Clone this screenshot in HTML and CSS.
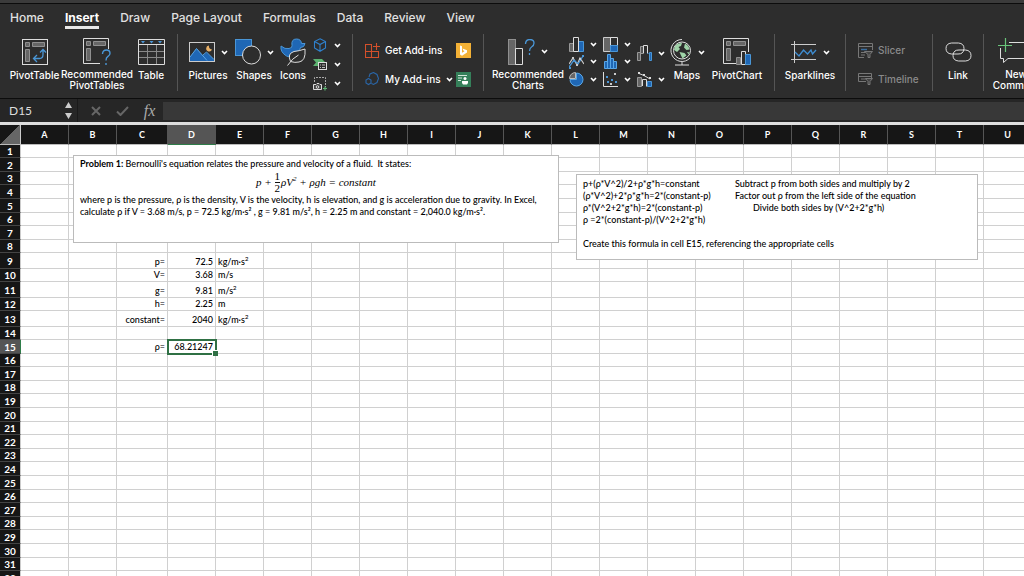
FILE: index.html
```html
<!doctype html>
<html lang="en-US">
	<head>
		<title>Workbook</title>
		<meta charset="UTF-8">
		<meta name="viewport" content="width=device-width, initial-scale=1.0">
		<link rel="stylesheet" href="styles.css">
	</head>

	<body>
		<svg class="defs" aria-hidden="true">
			<symbol id="chevron" viewBox="0 0 7 5"><path d="M1 1l2.500 2.500L6 1" fill="none" stroke="#fff" stroke-width="1.600"/></symbol>
		</svg>

		<div class="titlebar"></div>

		<nav class="tabs">
			<a href="#home">Home</a>
			<a href="#insert" class="active">Insert</a>
			<a href="#draw">Draw</a>
			<a href="#layout">Page Layout</a>
			<a href="#formulas">Formulas</a>
			<a href="#data">Data</a>
			<a href="#review">Review</a>
			<a href="#view">View</a>
		</nav>

		<div class="ribbon">
			<div class="group">
				<button class="tool w-pivot">
					<span class="icon"><svg width="26" height="26" viewBox="0 0 26 26" fill="none">
						<rect x=".5" y=".5" width="25" height="25" stroke="#ddd"/>
						<path d="M3.500 3.500h4v4h-4zM10.500 3.500h12v4h-12zM3.500 10.500h4v12h-4z" fill="#666" stroke="#909090"/>
						<path d="M12 19.500h5.500q3.500 0 3.500-4V11M15 16l-3.500 3.500L15 23M18 13.500l3-3 3 3" stroke="#4a96d6" stroke-width="1.300"/>
					</svg></span>
					PivotTable
				</button>
				<button class="tool w-rec">
					<span class="icon"><svg width="28" height="28" viewBox="0 0 28 28" fill="none">
						<path d="M17 25.500H.500V.500h25V11" stroke="#ddd"/>
						<path d="M3.500 3.500h4v4h-4zM10.500 3.500h12v4h-12zM3.500 10.500h4v12h-4z" fill="#666" stroke="#909090"/>
						<path d="M19.500 16q.200-4 4-4 3.500 0 3.500 3.200 0 2-2 3.200t-2 4M23 25v2" stroke="#4a96d6" stroke-width="1.400"/>
					</svg></span>
					Recommended<br>PivotTables
				</button>
				<button class="tool w-table">
					<span class="icon"><svg width="27" height="26" viewBox="0 0 27 26" fill="none">
						<path d="M9.500 6v19M18.500 6v19M1 12.500h25M1 18.500h25" stroke="#888"/>
						<path d="M.500.500h26v25H.500zM.500 5.500h26" stroke="#ddd"/>
						<path d="M3 2h4L5 4.500zM11.500 2h4l-2 2.500zM20 2h4l-2 2.500z" fill="#4a96d6"/>
					</svg></span>
					Table
				</button>
			</div>

			<div class="group">
				<button class="tool w-pictures">
					<span class="icon"><svg width="26" height="20" viewBox="0 0 26 20" fill="none">
						<path d="M1 15l6.500-8.500 6.500 7 3.500-3 7.500 7V19H1z" fill="#1f67b5"/>
						<path d="M1 15l6.500-8.500L18 18.500M13.500 13.500l4-3.500 7.500 7.500" stroke="#58a6e6"/>
						<rect x=".5" y=".5" width="25" height="19" stroke="#ccc"/>
						<path d="M20 3.500a3 3 0 1 0 3 4 3.500 3.500 0 0 1-3-4z" fill="#e8b067"/>
					</svg><svg class="chev"><use href="#chevron"/></svg></span>
					Pictures
				</button>
				<button class="tool w-shapes">
					<span class="icon"><svg width="26" height="26" viewBox="0 0 26 26">
						<rect x=".5" y=".5" width="16" height="16" fill="#1f67b5" stroke="#4a96d6"/>
						<circle cx="16.500" cy="16" r="9" fill="#2d2d2d" stroke="#ddd"/>
					</svg><svg class="chev"><use href="#chevron"/></svg></span>
					Shapes
				</button>
				<button class="tool w-icons">
					<span class="icon"><svg width="26" height="28" viewBox="0 0 26 28">
						<path d="M1 8q4 3.500 8 2.500 3.500-.500 3-3Q11 1 16.500 1q4.500 0 5 4.500H25q-.500 4-4.500 4-1 5-5 9-5 2-9-.500Q0 14 1 8z" fill="#1f67b5" stroke="#4a96d6"/>
						<path d="M10.500 23.500q-3.500-8 3.500-10 5-.500 11-2.500 1 12-6 13-4 1-8.500-.500z" fill="#2d2d2d" stroke="#ddd"/>
						<path d="M7.500 27.500q5-7.500 11-10.500" fill="none" stroke="#ddd"/>
					</svg></span>
					Icons
				</button>
				<div class="stack">
					<button class="mini" aria-label="3D Models"><svg width="14" height="14" viewBox="0 0 14 14" fill="none" stroke="#2f80cc">
						<path d="M7 .800l5.500 2.700v6.500L7 13.300 1.500 10V3.500zM1.500 3.500L7 6.500l5.500-3M7 6.500v6.800" stroke-width="1.100"/>
					</svg><svg class="chev"><use href="#chevron"/></svg></button>
					<button class="mini" aria-label="SmartArt"><svg width="14" height="12" viewBox="0 0 14 12">
						<path d="M0 1h9l3 3H6v4H0l3-3.500z" fill="#5cb270"/>
						<rect x="5.500" y="4.500" width="8" height="7" fill="#2d2d2d" stroke="#ddd"/>
						<path d="M7 7h1m1 0h3M7 9.500h1m1 0h3" stroke="#bbb"/>
					</svg><svg class="chev"><use href="#chevron"/></svg></button>
					<button class="mini" aria-label="Screenshot"><svg width="14" height="15" viewBox="0 0 14 15" fill="none">
						<path d="M1.500 6V1.500h11V11" stroke="#aaa" stroke-dasharray="2 1"/>
						<path d="M.500 8.500H3l1-1h2l1 1h1.500v5h-8z" fill="#444" stroke="#ddd"/>
						<circle cx="4.500" cy="11" r="1.300" stroke="#ddd"/>
						<path d="M10 12.500h4M12 10.500v4" stroke="#5cb270" stroke-width="1.200"/>
					</svg><svg class="chev"><use href="#chevron"/></svg></button>
				</div>
			</div>

			<div class="group addins">
				<div class="list">
					<button class="row"><svg width="15" height="15" viewBox="0 0 15 15" fill="none" stroke="#d3502b">
						<path d="M.500 1.500h6v13h-6zM.500 8.500h13v6H.500M11.500 0v7M8 3.500h7" stroke-width="1.100"/>
					</svg>Get Add-ins</button>
					<button class="row"><svg width="15" height="14" viewBox="0 0 15 14" fill="none" stroke="#2a66a8">
						<path d="M4 5l1-3 3.500-1.500L12 2.500l1.500 4-1.500 4-3.500 2-2-1M3.500 6.500l2.500 1.500v3L3.500 12.500 1 11V8z" stroke-width="1.100"/>
					</svg>My Add-ins<svg class="chev"><use href="#chevron"/></svg></button>
				</div>
				<div class="list">
					<button class="row" aria-label="Bing Maps"><svg width="15" height="15" viewBox="0 0 15 15">
						<rect width="15" height="15" fill="#f3b136"/>
						<path d="M4 2.500l2 .700v6.500l2.500-1.500-1.200-.600-.800-2 4.500 1.700v2.200L6 12.700l-2-1.200z" fill="#fff"/>
					</svg></button>
					<button class="row" aria-label="People Graph"><svg width="15" height="15" viewBox="0 0 15 15">
						<rect width="15" height="15" fill="#35805a"/>
						<path d="M2 3.500h9M2 6h4M2 8.500h3" stroke="#d4e8dc"/>
						<circle cx="9" cy="6.500" r="1.500" fill="#fff"/><path d="M6 9h6v2l-1 1.500H7L6 11z" fill="#fff"/>
					</svg></button>
				</div>
			</div>

			<div class="group">
				<button class="tool w-rec">
					<span class="icon"><svg width="27" height="26" viewBox="0 0 27 26" fill="none">
						<rect x=".5" y=".5" width="7" height="25" fill="#666" stroke="#909090"/>
						<path d="M7.500 9.500h7v16h-7z" stroke="#ddd"/>
						<path d="M17.500 5q.200-4.500 4.300-4.500T26 4q0 2.500-2.200 3.700T21.500 12M21.500 14v2" stroke="#4a96d6" stroke-width="1.300"/>
					</svg><svg class="chev"><use href="#chevron"/></svg></span>
					Recommended<br>Charts
				</button>
				<div class="stack charts">
					<button class="mini" aria-label="Column chart"><svg width="15" height="15" viewBox="0 0 15 15">
						<path d="M.500 6.500h4v8h-4z" fill="#666" stroke="#999"/><path d="M9.500 4.500h5v10h-5z" fill="#1f67b5" stroke="#4a96d6"/><path d="M4.500.500h5v14h-5z" fill="#2d2d2d" stroke="#ddd"/>
					</svg><svg class="chev"><use href="#chevron"/></svg></button>
					<button class="mini" aria-label="Line chart"><svg width="15" height="14" viewBox="0 0 15 14" fill="none">
						<path d="M0 9l4-6 4 7 3-7 4 6" stroke="#ccc" stroke-width="1.200"/><path d="M0 12l5-7 4 4 5-8" stroke="#4a96d6" stroke-width="1.300"/>
						<path d="M3 2h2v2H3zM7 9h2v2H7zM10 3h2v2h-2z" fill="#ccc"/><path d="M4 5h2v2H4zM13 0h2v2h-2zM0 12h2v2H0z" fill="#4a96d6"/>
					</svg><svg class="chev"><use href="#chevron"/></svg></button>
					<button class="mini" aria-label="Pie chart"><svg width="15" height="15" viewBox="0 0 15 15">
						<path d="M7.500 1A6.500 6.500 0 1 1 1 7.500h6.500z" fill="#1f67b5" stroke="#58a6e6"/><path d="M6.500.500v6h-6a6 6 0 0 1 6-6z" fill="#666" stroke="#bbb"/>
					</svg><svg class="chev"><use href="#chevron"/></svg></button>
				</div>
				<div class="stack charts">
					<button class="mini" aria-label="Treemap"><svg width="15" height="15" viewBox="0 0 15 15">
						<path d="M.500.500h7v14h-7z" fill="#666" stroke="#ccc"/><path d="M7.500.500h7v8h-7z" fill="none" stroke="#ddd"/><path d="M7.500 8.500h7v6h-7z" fill="#1f67b5" stroke="#4a96d6"/>
					</svg><svg class="chev"><use href="#chevron"/></svg></button>
					<button class="mini" aria-label="Histogram"><svg width="15" height="15" viewBox="0 0 15 15">
						<path d="M1.500 7.500h3v7h-3zM4.500.500h3v14h-3zM7.500 4.500h3v10h-3zM10.500 7.500h3v7h-3z" fill="#1f67b5" stroke="#58a6e6"/>
					</svg><svg class="chev"><use href="#chevron"/></svg></button>
					<button class="mini" aria-label="Scatter chart"><svg width="15" height="15" viewBox="0 0 15 15">
						<path d="M.500 0v14.500H15" fill="none" stroke="#ddd"/><path d="M3 4h2v2H3zM8 7h2v2H8zM4 9h2v2H4zM12 9h2v2h-2z" fill="#4a96d6"/><path d="M11 1h2v2h-2zM7 11h2v2H7z" fill="#ccc"/>
					</svg><svg class="chev"><use href="#chevron"/></svg></button>
				</div>
				<div class="stack charts pair">
					<button class="mini" aria-label="Waterfall chart"><svg width="15" height="16" viewBox="0 0 15 16" fill="none">
						<path d="M.500 7.500h3v8h-3zM3.500 1.500h3v7h-3z" fill="#555" stroke="#999"/><path d="M6.500 8V.500h4v8" stroke="#ddd"/><path d="M10.500 8.500h1M12.500 7.500h2v8h-2z" fill="#1f67b5" stroke="#4a96d6"/>
					</svg><svg class="chev"><use href="#chevron"/></svg></button>
					<button class="mini" aria-label="Combo chart"><svg width="15" height="15" viewBox="0 0 15 15">
						<path d="M.500 5.500h4v9h-4z" fill="#666" stroke="#999"/><path d="M5.500 14V7.500h4v7" fill="none" stroke="#ddd"/><path d="M10.500 9.500h4v5h-4z" fill="#1f67b5" stroke="#4a96d6"/><path d="M2 1.500l5 2 6 3.500" fill="none" stroke="#ddd"/><path d="M1 0h2v2H1zM6 2h2v2H6zM12 5h2v2h-2z" fill="#ddd"/>
					</svg><svg class="chev"><use href="#chevron"/></svg></button>
				</div>
				<button class="tool w-maps">
					<span class="icon"><svg width="22" height="27" viewBox="0 0 22 27" fill="none">
						<circle cx="12" cy="11.500" r="8.500" stroke="#ddd"/>
						<path d="M12 .500A11 11 0 1 0 20 19M12 22.500V26M5 26h14" stroke="#ddd"/>
						<path d="M5 7q3-3.500 7-3l-1 3-2.500 1 1.500 2-3 3-3-2zM15 4.500q4 2 4.500 6l-3 .500-2.500-2.500zM9.500 13l5 1 2 2.500-4 3-1.500-3zM17 13l2.500.500-1 2z" fill="#9fd3a8"/>
					</svg><svg class="chev"><use href="#chevron"/></svg></span>
					Maps
				</button>
				<button class="tool w-chart">
					<span class="icon"><svg width="28" height="28" viewBox="0 0 28 28">
						<path d="M13 25.500H.500V.500h25V14" fill="none" stroke="#ddd"/>
						<path d="M3.500 3.500h4v4h-4zM10.500 3.500h12v4h-12zM3.500 10.500h4v12h-4zM13.500 19.500h4v7h-4z" fill="#666" stroke="#909090"/>
						<path d="M18.500 13.500h4v13h-4z" fill="#2d2d2d" stroke="#ddd"/><path d="M22.500 16.500h5v10h-5z" fill="#1f67b5" stroke="#4a96d6"/>
					</svg></span>
					PivotChart
				</button>
			</div>

			<div class="group">
				<button class="tool w-spark">
					<span class="icon"><svg width="26" height="22" viewBox="0 0 26 22" fill="none">
						<path d="M3.500 0v22M0 3.500h25M0 18.500h25" stroke="#ccc"/><path d="M4 11l4 4 4.500-6 4 4 3.500-4 1.500 4L25 9" stroke="#3e8cd0" stroke-width="1.300"/>
					</svg><svg class="chev"><use href="#chevron"/></svg></span>
					Sparklines
				</button>
			</div>

			<div class="group filters">
				<div class="list">
					<button class="row" disabled><svg width="15" height="15" viewBox="0 0 15 15" fill="none" stroke="#777">
						<path d="M6 14.500H.500V.500h14V7M.500 3.500h14M3 9.500h4M3 12h4"/><path d="M3 6.500h6" stroke="#3a6ea0" stroke-width="1.500"/><path d="M6.500 8.500h8L12 11.500v3h-2v-3z" fill="#444"/>
					</svg>Slicer</button>
					<button class="row" disabled><svg width="15" height="12" viewBox="0 0 15 12" fill="none" stroke="#777">
						<path d="M8 8.500H.500V.500h13V5M.500 3.500h13M3 6h5"/><path d="M7.500 5.500h7L12 8.500v3h-2v-3z" fill="#444"/>
					</svg>Timeline</button>
				</div>
			</div>

			<div class="group">
				<button class="tool w-link">
					<span class="icon"><svg width="27" height="20" viewBox="0 0 27 20" fill="none" stroke="#ddd">
						<path d="M9 12H6.500Q1 11.500 1 6.500T6.500 1h7Q19 1.500 19 6.500 19 9.500 17 11"/><path d="M18 8h2.500q5.500.500 5.500 5.500T20.500 19h-7Q8 18.500 8 13.500 8 10.500 10 9"/>
						<path d="M9 12h4q3 0 4-1M18 8h-4q-3 0-4 1"/>
					</svg></span>
					Link
				</button>
			</div>

			<div class="group">
				<button class="tool w-comment">
					<span class="icon"><svg width="36" height="28" viewBox="0 0 36 28" fill="none">
						<path d="M11 4.500h24v16H10l-4.500 4v-4H2.500V10" stroke="#ddd"/><path d="M0 7.500h14M7.500 0v14" stroke="#69c47a" stroke-width="1.200"/>
					</svg></span>
					New<br>Comment
				</button>
			</div>
		</div>

		<div class="formula-bar">
			<input class="name-box" type="text" aria-label="Name box" value="D15">
			<button class="stepper" aria-label="Choose name"><svg width="7" height="17" viewBox="0 0 7 17"><path d="M3.500 0L7 6H0zM0 11h7l-3.500 6z" fill="#ccc"/></svg></button>
			<button class="edit" aria-label="Cancel"><svg width="10" height="10" viewBox="0 0 10 10"><path d="M1 1l8 8M9 1L1 9" stroke="#666" stroke-width="2"/></svg></button>
			<button class="edit" aria-label="Enter"><svg width="13" height="10" viewBox="0 0 13 10"><path d="M1 5.500L4.500 9 12 1" fill="none" stroke="#666" stroke-width="2"/></svg></button>
			<button class="edit fx" aria-label="Insert function">fx</button>
			<input class="formula" type="text" aria-label="Formula">
		</div>

		<main class="sheet">
			<table id="grid"></table>

			<section class="textbox problem">
				<p><b>Problem 1:</b> Bernoulli's equation relates the pressure and velocity of a fluid.&nbsp; It states:</p>
				<p class="equation">p + <span class="fraction"><span>1</span><span>2</span></span>ρV<sup>2</sup>&nbsp;+ ρgh = constant</p>
				<p>where p is the pressure, ρ is the density, V is the velocity, h is elevation, and g is acceleration due to gravity. In Excel,<br>
				calculate ρ if V = 3.68 m/s, p = 72.5 kg/m·s² , g = 9.81 m/s², h = 2.25 m and constant = 2,040.0 kg/m·s².</p>
			</section>

			<section class="textbox steps">
				<p><span>p+(ρ*V^2)/2+ρ*g*h=constant</span><span>Subtract p from both sides and multiply by 2</span></p>
				<p><span>(ρ*V^2)+2*ρ*g*h=2*(constant-p)</span><span>Factor out ρ from the left side of the equation</span></p>
				<p class="indent"><span>ρ*(V^2+2*g*h)=2*(constant-p)</span><span>Divide both sides by (V^2+2*g*h)</span></p>
				<p>ρ =2*(constant-p)/(V^2+2*g*h)</p>
				<p class="note">Create this formula in cell E15, referencing the appropriate cells</p>
			</section>
		</main>

		<script>
		const columns = "ABCDEFGHIJKLMNOPQRSTU".split("");
		const rowCount = 32;
		const selected = "D15";

		const cells = {
			C9: "p=",         D9: "72.5",      E9: "kg/m·s<sup>2</sup>",
			C10: "V=",        D10: "3.68",     E10: "m/s",
			C11: "g=",        D11: "9.81",     E11: "m/s<sup>2</sup>",
			C12: "h=",        D12: "2.25",     E12: "m",
			C13: "constant=", D13: "2040",     E13: "kg/m·s<sup>2</sup>",
			C15: "ρ=",        D15: "68.21247"
		};

		let head = `<tr><th class="corner"></th>`;
		columns.forEach(c => {
			head += `<th class="col-${c}${selected[0] === c ? " current" : ""}">${c}</th>`;
		});

		let body = "";
		for (let r = 1; r <= rowCount; r++) {
			body += `<tr><th${selected === "D" + r ? ' class="current"' : ""}>${r}</th>`;
			columns.forEach(c => {
				let key = c + r;
				let side = c === "E" ? "left" : "right";
				let cls = key === selected ? `${side} selected` : side;
				body += cells[key] ? `<td class="${cls}">${cells[key]}</td>` : "<td></td>";
			});
			body += "</tr>";
		}

		document.getElementById("grid").innerHTML = `<thead>${head}</tr></thead><tbody>${body}</tbody>`;
		</script>
	</body>
</html>
```

FILE: styles.css
```css
* {
	box-sizing: border-box;
	margin: 0;
	padding: 0;
}

body {
	height: 100vh;
	display: flex;
	flex-direction: column;
	overflow: hidden;
	background: #2d2d2d;
	color: #fff;
	font-family: Inter, "Liberation Sans", sans-serif;
}

button, input {
	background: none;
	border: none;
	color: inherit;
	font: inherit;
}

svg {
	flex: none;
}

.defs {
	display: none;
}

.titlebar {
	flex: none;
	height: 4px;
	background: #3b3b3b;
	border-bottom: 1px solid #0c0c0c;
}

/* ribbon tabs */
.tabs {
	flex: none;
	display: flex;
	gap: 21px;
	padding: 6px 10px 0;
	font-size: 12px;
	font-weight: 500;
	line-height: 15px;
}

.tabs a {
	color: #e0e0e0;
	text-decoration: none;
	padding-bottom: 1px;
	border-bottom: 3px solid transparent;
}

.tabs .active {
	color: #fff;
	font-weight: 700;
	border-color: #e8e8e8;
}

/* ribbon tools */
.ribbon {
	flex: none;
	display: flex;
	padding: 5px 0 7px;
	font-size: 10px;
	font-weight: 500;
	line-height: 11px;
	border-bottom: 1px solid #0c0c0c;
	overflow: hidden;
}

.group {
	flex: none;
	display: flex;
	height: 57px;
	padding: 0 8px;
	border-right: 1px solid #555;
}

.group:last-child {
	padding-left: 4px;
	border-right: none;
}

.tool {
	flex: none;
	display: flex;
	flex-direction: column;
	align-items: center;
	white-space: nowrap;
}

.icon {
	display: flex;
	align-items: center;
	gap: 6px;
	height: 36px;
}

.chev {
	width: 7px;
	height: 5px;
}

.w-pivot { width: 53px; }
.w-rec { width: 72px; }
.w-table { width: 36px; }
.w-pictures { width: 44px; }
.w-shapes { width: 48px; }
.w-icons { width: 30px; }
.w-maps { width: 42px; }
.w-chart { width: 58px; }
.w-spark { width: 54px; }
.w-link { width: 34px; }
.w-comment { width: 56px; }

.stack {
	display: flex;
	flex-direction: column;
	justify-content: space-between;
	width: 36px;
	padding: 3px 0 0 5px;
}

.charts {
	width: 34px;
	padding: 2px 0 4px 5px;
}

.charts.pair {
	justify-content: flex-end;
	gap: 10px;
}

.mini {
	display: flex;
	align-items: center;
	justify-content: space-between;
	width: 28px;
	height: 16px;
}

.list {
	display: flex;
	flex-direction: column;
	gap: 13px;
}

.row {
	display: flex;
	align-items: center;
	gap: 5px;
	height: 16px;
	white-space: nowrap;
}

.addins, .filters {
	padding: 8px 12px 0;
}

.addins .list:first-child {
	width: 91px;
}

.filters .list {
	width: 62px;
}

.row:disabled {
	color: #8a8a8a;
}

/* formula bar */
.formula-bar {
	flex: none;
	display: flex;
	align-items: center;
	height: 23px;
	background: #262626;
}

.name-box {
	width: 65px;
	padding-left: 9px;
	font-family: Lato, sans-serif;
	font-size: 12px;
	color: #ddd;
}

.stepper {
	display: flex;
	align-items: center;
	width: 13px;
	height: 23px;
	border-right: 1px solid #1a1a1a;
}

.edit {
	width: 27px;
	height: 20px;
	display: flex;
	align-items: center;
	justify-content: center;
}

.stepper + .edit {
	margin-left: 4px;
}

.fx {
	font: italic 16px "Liberation Serif", serif;
	color: #aaa;
}

.formula {
	flex: 1;
	height: 18px;
	background: #383838;
}

/* worksheet */
.sheet {
	position: relative;
	flex: 1;
	overflow: hidden;
	background: #fff;
	color: #000;
	font-family: Lato, Carlito, sans-serif;
	font-weight: 500;
	border-top: 3px solid #ddd;
}

#grid {
	table-layout: fixed;
	width: 1032px;
	border-collapse: separate;
	border-spacing: 0;
	font-size: 9px;
	font-weight: 500;
	line-height: 12px;
}

#grid th {
	width: 48px;
	background: #161616;
	color: #fff;
	font-weight: 700;
	border-right: 1px solid #555;
}

#grid thead th {
	height: 20px;
	border-bottom: 1px solid #bbb;
}

#grid .corner {
	width: 21px;
	background: linear-gradient(to bottom right, #161616 50%, #666 50%);
	border-right-color: #ccc;
}

#grid .col-C {
	width: 51px;
}

#grid th.current {
	background: #555;
}

#grid thead .current {
	border-bottom-color: #2f7d4a;
}

#grid tbody th {
	font-size: 10px;
	border-right-color: #ccc;
	border-bottom: 1px solid #444;
}

#grid tbody .current {
	border-right-color: #2f7d4a;
}

#grid tbody tr {
	height: 14px;
}

#grid tbody tr:nth-child(5n+1), #grid tbody tr:nth-child(5n+3),
#grid tbody tr:nth-child(10), #grid tbody tr:nth-child(12), #grid tbody tr:nth-child(14) {
	height: 13px;
}

#grid tbody tr:nth-child(9), #grid tbody tr:nth-child(11), #grid tbody tr:nth-child(13) {
	height: 16px;
}

#grid td {
	border-right: 1px solid #d0d0d0;
	border-bottom: 1px solid #d0d0d0;
	white-space: nowrap;
	vertical-align: bottom;
}

#grid .left {
	padding-left: 2px;
}

#grid .right {
	padding-right: 2px;
	text-align: right;
}

#grid .selected {
	position: relative;
	outline: 2px solid #2f7044;
	outline-offset: -1px;
}

#grid .selected::after {
	content: "";
	position: absolute;
	right: -3px;
	bottom: -3px;
	width: 5px;
	height: 5px;
	background: #2f7044;
	border: 1px solid #fff;
	border-width: 1px 0 0 1px;
}

sup {
	font-size: 6px;
	line-height: 0;
}

/* text boxes floating over the cells */
.textbox {
	position: absolute;
	background: #fff;
	border: 1px solid #bbb;
	font-size: 9px;
	line-height: 12px;
	white-space: nowrap;
}

.problem {
	left: 73px;
	top: 30px;
	width: 486px;
	height: 88px;
	padding: 2px 6px;
}

.equation {
	display: flex;
	align-items: center;
	justify-content: center;
	height: 24px;
	font: italic 11px "Liberation Serif", serif;
	white-space: pre;
}

.fraction {
	display: flex;
	flex-direction: column;
	font-style: normal;
	line-height: 11px;
	padding-right: 1px;
}

.fraction span:first-child {
	border-bottom: 1px solid #111;
}

.equation sup {
	align-self: flex-start;
	font-size: 7px;
	line-height: 18px;
}

.steps {
	left: 576px;
	top: 49px;
	width: 402px;
	height: 86px;
	padding: 3px 6px;
}

.steps p {
	display: flex;
}

.steps span:first-child {
	width: 152px;
}

.steps .indent span:last-child {
	padding-left: 18px;
}

.steps .note {
	margin-top: 12px;
}
```
